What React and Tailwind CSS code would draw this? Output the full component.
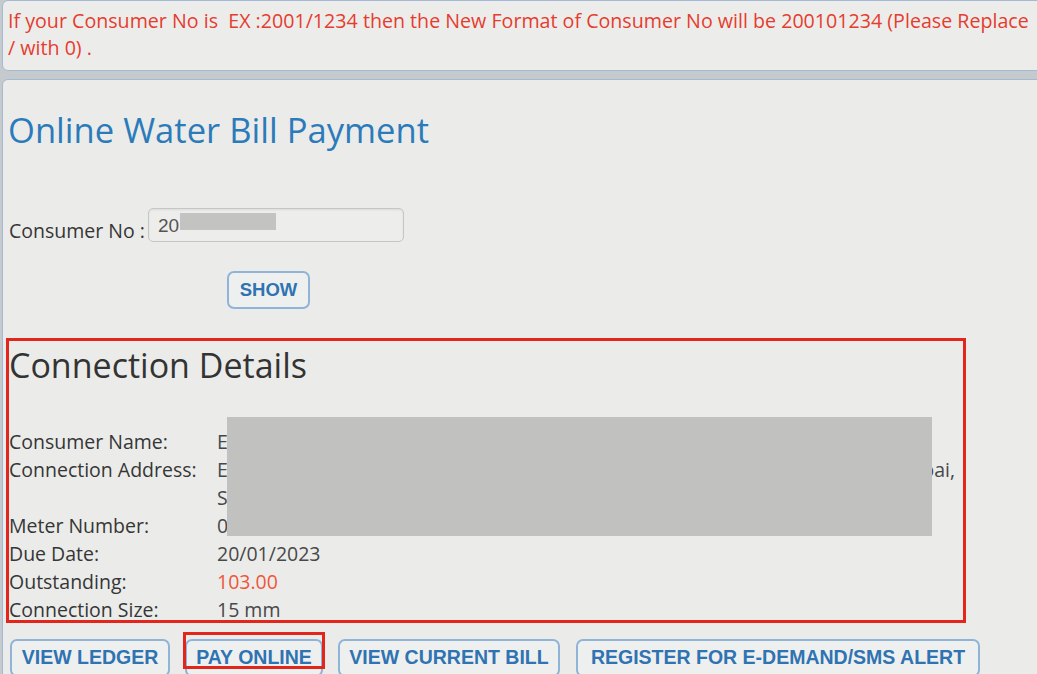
import React from "react";

const btn =
  "h-[38px] shrink-0 rounded-[7px] border-2 border-[#8fb4d8] bg-[#eef0ef] font-['Liberation_Sans'] font-bold leading-none text-[#2f73b2] flex items-center justify-center";

function Row({ label, children, valueClass = "" }) {
  return (
    <div className="flex h-[28px] text-[19.5px] leading-[28px]">
      <div className="w-[208px] shrink-0 text-[#363636]">{label}</div>
      <div className={"flex-1 pr-[8px] " + (valueClass || "text-[#484848]")}>{children}</div>
    </div>
  );
}

export default function App() {
  return (
    <div className="w-[1037px] h-[674px] overflow-hidden bg-[#c5cacd] pl-[2px] font-['Open_Sans'] antialiased">
      {/* notice */}
      <div className="h-[71px] -mr-[20px] rounded-tl-[6px] rounded-bl-[6px] border border-[#a3b9d5] bg-[#ecedeb] pl-[5px] pt-[6px] text-[19.65px] leading-[27px] text-[#e63c2f] whitespace-pre-wrap">
        {"If your Consumer No is  EX :2001/1234 then the New Format of Consumer No will be 200101234 (Please Replace\n/ with 0) ."}
      </div>

      {/* main */}
      <div className="mt-[8px] h-[600px] -mr-[20px] rounded-tl-[6px] border border-[#a3b9d5] bg-[#ebecea] pl-[3px]">
        <h1 className="mt-[30px] pl-[2px] text-[34.6px] leading-[40px] font-normal text-[#2b7bbb]">
          Online Water Bill Payment
        </h1>

        <div className="mt-[58px] flex items-start pl-[3px]">
          <span className="mt-[9px] text-[19.5px] leading-[27px] text-[#363636] whitespace-pre">Consumer No :</span>
          <div className="relative ml-[3px] h-[34px] w-[256px] rounded-[5px] border border-[#c6c6c6] bg-[#ededeb] shadow-[inset_0_1px_2px_rgba(0,0,0,0.08)]">
            <span className="absolute left-[9px] top-[6px] font-['Liberation_Sans'] text-[19px] leading-[22px] text-[#555]">20</span>
            <div className="absolute left-[31px] top-[4px] h-[17px] w-[96px] bg-[#c3c3c2]" />
          </div>
        </div>

        <div className="mt-[27px] ml-[221px]">
          <div className={btn + " w-[83px] h-[37px] text-[18.5px]"}>SHOW</div>
        </div>

        {/* connection details */}
        <div className="relative mt-[29px] h-[285px] w-[960px] border-[3px] border-[#e2261c]">
          <h2 className="mt-[4px] text-[34px] leading-[40px] font-normal text-[#333]">Connection Details</h2>
          <div className="mt-[43px]">
            <Row label="Consumer Name:">E</Row>
            <Row label="Connection Address:">
              <div className="flex justify-between">
                <span>E</span>
                <span>bai,</span>
              </div>
            </Row>
            <Row label="">S</Row>
            <Row label="Meter Number:">0</Row>
            <Row label="Due Date:">20/01/2023</Row>
            <Row label="Outstanding:" valueClass="text-[#f0563a]">103.00</Row>
            <Row label="Connection Size:">15 mm</Row>
          </div>
          <div className="absolute left-[218px] top-[76px] h-[119px] w-[705px] bg-[#c1c1c0]" />
        </div>

        {/* buttons */}
        <div className="mt-[16px] ml-[4px] flex gap-[15px] text-[19.5px]">
          <div className={btn + " w-[160px]"}>VIEW LEDGER</div>
          <div className="relative">
            <div className={btn + " w-[138px]"}>PAY ONLINE</div>
            <div className="absolute -left-[2px] -right-[2px] -top-[7px] bottom-[8px] border-[3px] border-[#e2261c]" />
          </div>
          <div className={btn + " w-[222px]"}>VIEW CURRENT BILL</div>
          <div className={btn + " ml-[1px] w-[404px]"}>REGISTER FOR E-DEMAND/SMS ALERT</div>
        </div>
      </div>
    </div>
  );
}
